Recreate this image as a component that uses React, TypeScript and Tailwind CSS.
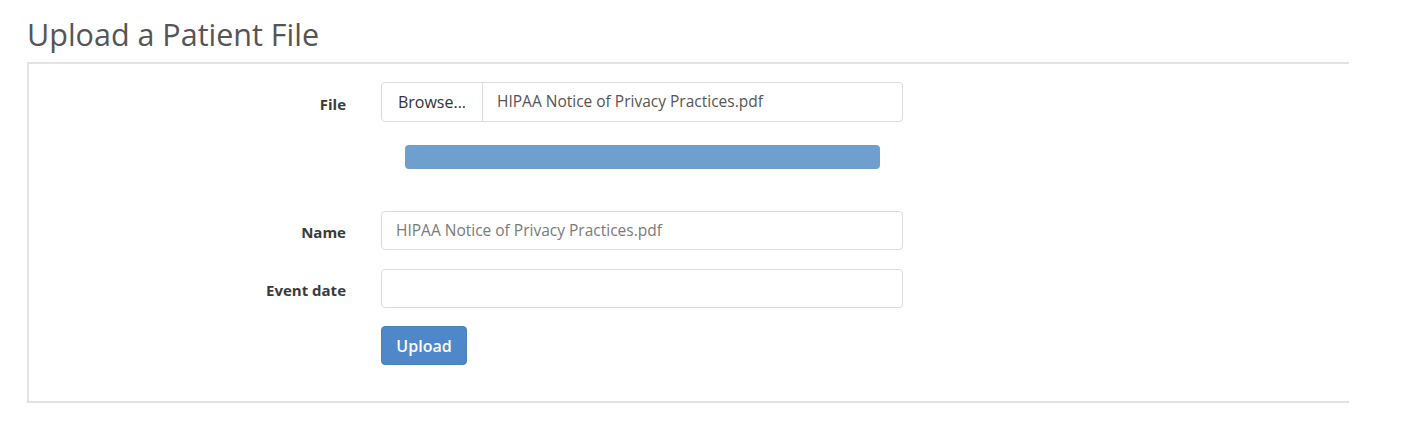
import React from "react";

export default function App() {
  return (
    <div className="w-[1422px] h-[440px] bg-white pl-[27px] pt-[14px]" style={{ fontFamily: '"Open Sans", "Liberation Sans", sans-serif' }}>
      <h1 className="text-[30.5px] leading-[40px] text-[#555555] font-normal m-0 h-[48px]">Upload a Patient File</h1>
      <div className="w-[1322px] h-[341px] border-l-2 border-t-2 border-b-2 border-[#e3e3e3] pt-[18px]">
        <div className="flex items-center h-[40px]">
          <div className="w-[317px] pt-[4px] text-right text-[15px] font-bold text-[#3a3a3a]">File</div>
          <div className="ml-[35px] w-[522px] h-[40px] flex border border-[#dcdcdc] rounded-[4px] overflow-hidden">
            <div className="w-[101px] border-r border-[#dcdcdc] flex items-center justify-center text-[16px] text-[#333333]">Browse...</div>
            <div className="flex-1 flex items-center pl-[14px] text-[15.5px] text-[#555555]">HIPAA Notice of Privacy Practices.pdf</div>
          </div>
        </div>
        <div className="ml-[376px] mt-[23px] w-[475px] h-[24px] rounded-[4px] bg-[#6f9fcf]"></div>
        <div className="flex items-center h-[39px] mt-[42px]">
          <div className="w-[317px] pt-[4px] text-right text-[15px] font-bold text-[#3a3a3a]">Name</div>
          <div className="ml-[35px] w-[522px] h-[39px] flex items-center border border-[#dcdcdc] rounded-[4px] pl-[14px] text-[15.5px] text-[#7a7a7a]">HIPAA Notice of Privacy Practices.pdf</div>
        </div>
        <div className="flex items-center h-[39px] mt-[19px]">
          <div className="w-[317px] pt-[4px] text-right text-[15px] font-bold text-[#3a3a3a]">Event date</div>
          <div className="ml-[35px] w-[522px] h-[39px] border border-[#dcdcdc] rounded-[4px]"></div>
        </div>
        <div className="ml-[352px] mt-[18px] w-[86px] h-[39px] rounded-[4px] bg-[#4f88c8] border border-[#4a80bd] flex items-center justify-center text-[16px] font-semibold text-white">Upload</div>
      </div>
    </div>
  );
}
